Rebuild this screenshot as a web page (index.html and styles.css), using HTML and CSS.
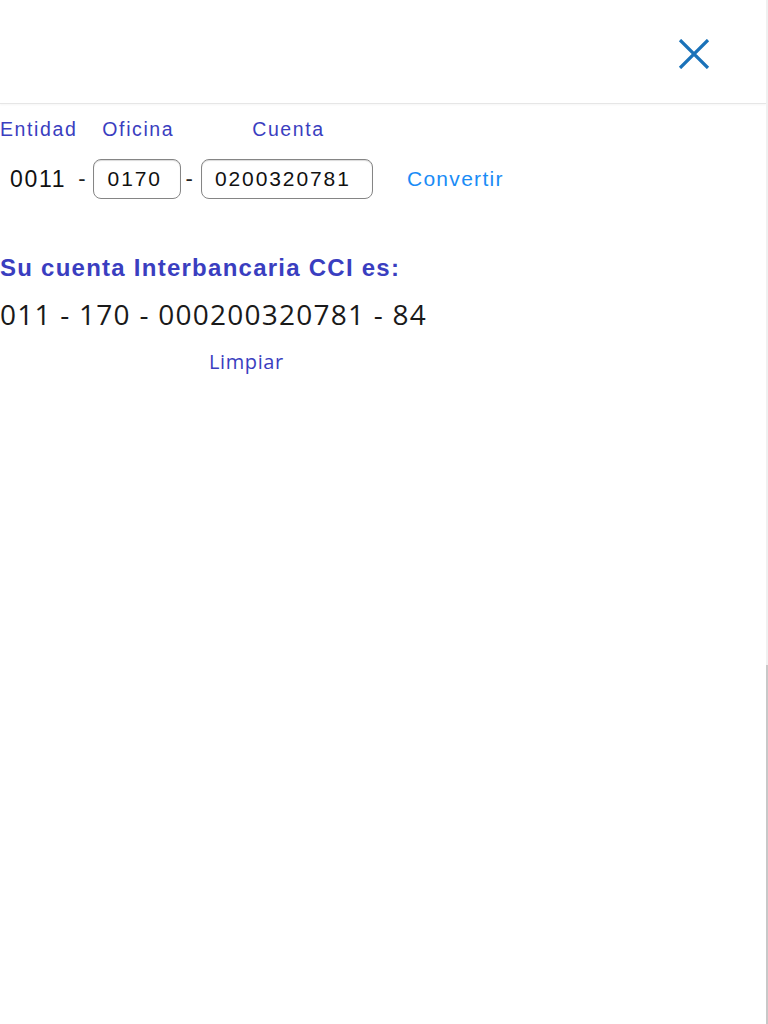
FILE: index.html
```html
<!DOCTYPE html>
<html lang="es">
<head>
<meta charset="utf-8">
<title>CCI</title>
<link rel="stylesheet" href="styles.css">
</head>
<body>
<div class="page">
  <main class="main">
    <header class="topbar">
      <button class="close" aria-label="Cerrar">
        <svg width="32" height="30" viewBox="0 0 32 30"><path d="M2 1 L30 29 M30 1 L2 29" stroke="#1a72b9" stroke-width="3.2" fill="none"/></svg>
      </button>
    </header>
    <section class="form">
      <div class="labels">
        <span class="lbl lbl-ent">Entidad</span>
        <span class="lbl lbl-ofi">Oficina</span>
        <span class="lbl lbl-cta">Cuenta</span>
      </div>
      <div class="row">
        <span class="entity">0011</span>
        <span class="dash">-</span>
        <span class="field field-ofi">0170</span>
        <span class="dash dash2">-</span>
        <span class="field field-cta">0200320781</span>
        <span class="convert">Convertir</span>
      </div>
      <h2 class="result-title">Su cuenta Interbancaria CCI es:</h2>
      <p class="result">011 - 170 - 000200320781 - 84</p>
      <div class="clear-wrap"><span class="clear">Limpiar</span></div>
    </section>
  </main>
  <div class="edge"></div>
</div>
</body>
</html>
```
FILE: styles.css
```css
html, body { margin: 0; padding: 0; background: #fff; }
body { font-family: "Liberation Sans", Arial, sans-serif; }
.page { display: flex; height: 1024px; }
.main { flex: 1; }
.edge { width: 2px; background: linear-gradient(#f0f0f0 0, #f0f0f0 665px, #c8c8c8 665px, #c8c8c8 100%); }
.topbar {
  height: 104px;
  border-bottom: 1px solid #e6e6e6;
  box-shadow: 0 1px 2px rgba(0,0,0,0.04);
  display: flex; justify-content: flex-end; align-items: flex-start;
  padding-right: 56px;
  box-sizing: border-box;
}
.close { border: 0; background: none; padding: 0; margin-top: 39px; line-height: 0; }
.form { padding-top: 14px; }
.labels { display: flex; height: 22px; align-items: center; font-size: 19.5px; letter-spacing: 1.6px; color: #3a3ec0; }
.lbl-ent { margin-left: 0; }
.lbl-ofi { margin-left: 25px; }
.lbl-cta { margin-left: 78px; }
.row { display: flex; align-items: center; margin-top: 19px; height: 40px; }
.entity { font-size: 23px; letter-spacing: 1.7px; color: #111; margin-left: 10px; }
.dash { font-size: 22px; color: #222; margin-left: 12px; margin-right: 7px; }
.dash2 { margin-left: 5px; margin-right: 8px; }
.field {
  box-sizing: border-box; height: 40px; border: 1.5px solid #858585; border-radius: 8px;
  font-size: 21px; letter-spacing: 1.9px; color: #111; display: flex; align-items: center; padding-left: 13px;
  box-shadow: inset 0 1px 1px rgba(0,0,0,0.15);
}
.field-ofi { width: 88px; padding-left: 14px; }
.field-cta { width: 172px; }
.convert { font-size: 21px; letter-spacing: 1.3px; color: #1a8cf6; margin-left: 34px; }
.result-title { margin: 55px 0 0 0; font-size: 24px; letter-spacing: 1.25px; font-weight: bold; color: #3a3ec0; line-height: 28px; }
.result { margin: 14px 0 0 0; font-family: "Open Sans", sans-serif; font-size: 28px; font-weight: 400; color: #1a1a1a; line-height: 36px; letter-spacing: 1.25px; }
.clear-wrap { margin-top: 16px; padding-left: 209px; }
.clear { font-family: "Open Sans", sans-serif; font-size: 20px; letter-spacing: 0.6px; color: #3a3ec0; }
```
